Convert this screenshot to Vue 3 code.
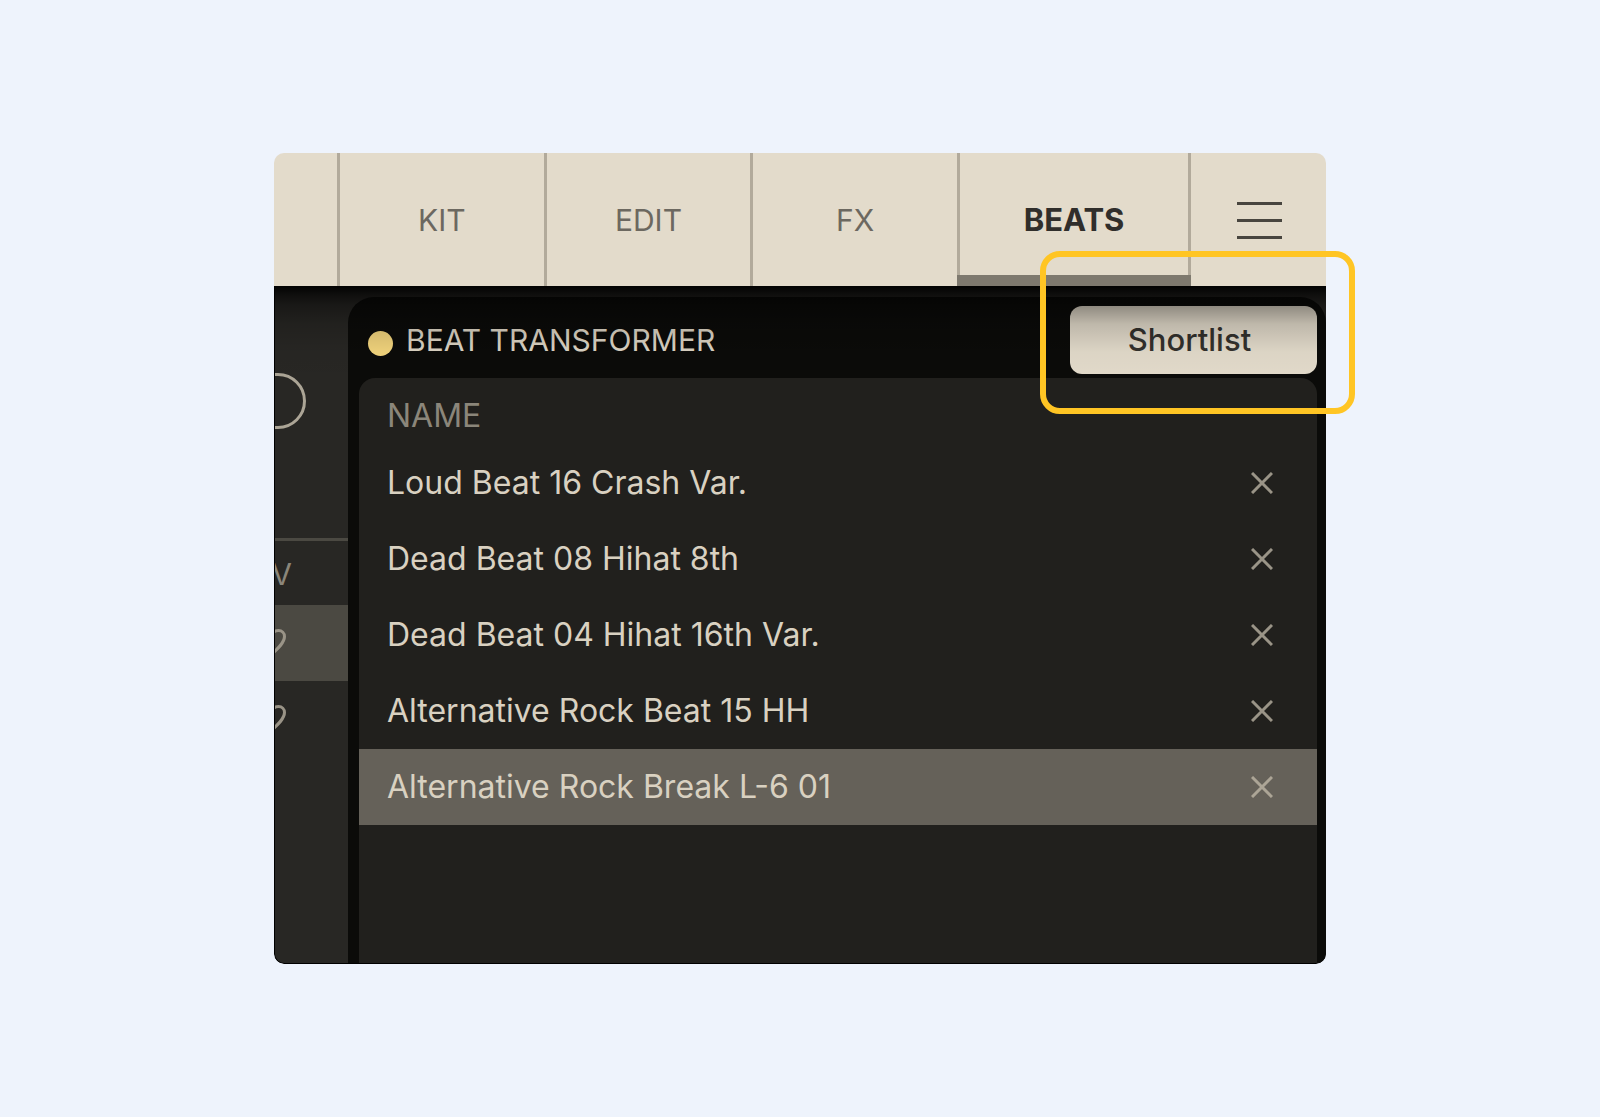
<script setup>
import { ref } from 'vue';

const tabs = ['KIT', 'EDIT', 'FX', 'BEATS'];
const activeTab = ref('BEATS');
const search = ref('');

const beats = ref([
  { id: 1, name: 'Loud Beat 16 Crash Var.' },
  { id: 2, name: 'Dead Beat 08 Hihat 8th' },
  { id: 3, name: 'Dead Beat 04 Hihat 16th Var.' },
  { id: 4, name: 'Alternative Rock Beat 15 HH' },
  { id: 5, name: 'Alternative Rock Break L-6 01' }
]);
const selectedId = ref(5);

// rows of the library that stay visible left of the panel
const favRows = ref([
  { id: 1, selected: true },
  { id: 2, selected: false }
]);

const removeBeat = (id) => {
  beats.value = beats.value.filter((b) => b.id !== id);
};
</script>

<template>
  <main class="page">
    <div class="stage">
      <div class="window">
        <nav class="tabs">
          <span class="tab-stub"></span>
          <button
            v-for="tab in tabs"
            :key="tab"
            type="button"
            :class="['tab', { active: tab === activeTab }]"
            @click="activeTab = tab"
          >
            {{ tab }}
          </button>
          <button type="button" class="menu" aria-label="Menu">
            <span></span>
            <span></span>
            <span></span>
          </button>
        </nav>

        <div class="body">
          <aside class="library">
            <div class="search-row">
              <input v-model="search" class="search" type="text" aria-label="Search">
            </div>
            <div class="fav-head">V</div>
            <div v-for="row in favRows" :key="row.id" :class="['fav-row', { selected: row.selected }]">
              <button type="button" aria-label="Favourite" @click="row.selected = !row.selected">
                <svg width="28" height="27" viewBox="0 0 28 27">
                  <path d="M14 25 C20 19.500 26.500 13.500 26.500 7.500 C26.500 4 24 1.500 20.500 1.500 C17.500 1.500 15 3 14 6 C13 3 10.500 1.500 7.500 1.500 C4 1.500 1.500 4 1.500 7.500 C1.500 13.500 8 19.500 14 25 Z" />
                </svg>
              </button>
            </div>
          </aside>

          <section class="panel">
            <header class="panel-head">
              <span class="dot"></span>
              <h2>BEAT TRANSFORMER</h2>
              <button type="button" class="shortlist">Shortlist</button>
            </header>

            <div class="list">
              <div class="list-head">NAME</div>
              <ul>
                <li
                  v-for="beat in beats"
                  :key="beat.id"
                  :class="['beat', { selected: beat.id === selectedId }]"
                  @click="selectedId = beat.id"
                >
                  <span>{{ beat.name }}</span>
                  <button type="button" :aria-label="'Remove ' + beat.name" @click.stop="removeBeat(beat.id)">
                    <svg width="22" height="22" viewBox="0 0 22 22">
                      <path d="M1 1 L21 21 M21 1 L1 21" />
                    </svg>
                  </button>
                </li>
              </ul>
            </div>
          </section>
          <div class="shade"></div>
        </div>
      </div>
      <div class="highlight"></div>
    </div>
  </main>
</template>

<style>
body {
  margin: 0;
  background: #eef3fc;
}
</style>

<style scoped>
* {
  box-sizing: border-box;
}

button {
  border: none;
  padding: 0;
  background: none;
  font: inherit;
  color: inherit;
  cursor: pointer;
}

.page {
  display: flex;
  min-height: 100vh;
  padding: 153px 274px;
  font-family: Inter, "Liberation Sans", sans-serif;
  font-size: 30px;
  line-height: 38px;
}

.stage {
  position: relative;
  display: flex;
  flex: 1;
}

.window {
  display: flex;
  flex-direction: column;
  flex: 1;
  min-width: 0;
  overflow: hidden;
  border-radius: 10px;
}

/* top tabs */
.tabs {
  display: flex;
  height: 133px;
  background: #e3dbcb;
  color: #6c6860;
}

.tab-stub {
  flex: 64;
}

.tab {
  flex: 207;
  border-left: 3px solid #b2aa9b;
}

.tab.active {
  position: relative;
  flex: 232;
  color: #302e2b;
  font-size: 31px;
  font-weight: 700;
}

/* underline runs over both dividers */
.tab.active::after {
  content: "";
  position: absolute;
  right: -3px;
  bottom: 0;
  left: -3px;
  height: 11px;
  background: #7e796e;
}

.menu {
  display: flex;
  flex: 135;
  flex-direction: column;
  align-items: center;
  justify-content: center;
  gap: 14px;
  padding: 2px 0 0 2px;
  border-left: 3px solid #b2aa9b;
}

.menu span {
  width: 45px;
  height: 3px;
  background: #48453f;
}

/* body */
.body {
  position: relative;
  display: flex;
  flex: 1;
  border: 1px solid #000;
  border-width: 0 0 1px 1px;
  border-radius: 0 0 10px 10px;
  overflow: hidden;
  background: #282724;
}

.shade {
  position: absolute;
  inset: 0 0 auto;
  height: 100px;
  pointer-events: none;
  background: linear-gradient(
    rgba(0, 0, 0, 0.95),
    rgba(0, 0, 0, 0.62) 9px,
    rgba(0, 0, 0, 0.38) 19px,
    rgba(0, 0, 0, 0.16) 38px,
    rgba(0, 0, 0, 0.03) 66px,
    transparent
  );
}

.library {
  width: 73px;
  overflow: hidden;
}

.search-row {
  display: flex;
  justify-content: flex-end;
  height: 255px;
  padding: 87px 42px 0 0;
  border-bottom: 3px solid #4b4942;
}

.search {
  flex: none;
  width: 200px;
  height: 56px;
  padding: 0 24px;
  border: 3px solid #aca596;
  border-radius: 28px;
  background: none;
  color: #d9d1c1;
  font: inherit;
}

.fav-head {
  display: flex;
  justify-content: flex-end;
  height: 64px;
  padding: 14px 56px 0 0;
  color: #8b867a;
}

.fav-row {
  display: flex;
  align-items: center;
  justify-content: flex-end;
  height: 76px;
  padding: 0 62px 2px 0;
}

.fav-row.selected {
  background: #4b4942;
}

.fav-row button,
.beat button {
  display: flex;
  flex: none;
}

svg path {
  fill: none;
  stroke: #9a9487;
  stroke-width: 3;
}

/* beat transformer panel */
.panel {
  display: flex;
  flex: 1;
  flex-direction: column;
  margin-top: 11px;
  padding: 0 9px 0 11px;
  border-radius: 26px 26px 0 0;
  background: #0b0b09;
}

.panel-head {
  display: flex;
  align-items: center;
  height: 81px;
  padding: 0 0 0 9px;
  color: #ddd5c5;
}

.dot {
  width: 25px;
  height: 25px;
  margin-top: 12px;
  border-radius: 50%;
  background: #f3d57d;
}

.panel-head h2 {
  flex: 1;
  margin: 4px 0 0 13px;
  font-size: 30px;
  font-weight: 400;
}

.shortlist {
  width: 247px;
  height: 68px;
  margin-top: 4px;
  padding-right: 8px;
  border-radius: 12px;
  background: #e3dbcb;
  color: #33312d;
  font-size: 31px;
  font-weight: 500;
}

.list {
  flex: 1;
  border-radius: 16px 16px 0 0;
  background: #21201d;
  font-size: 32px;
}

.list-head {
  height: 67px;
  padding: 19px 28px 0;
  color: #8b867a;
}

ul {
  margin: 0;
  padding: 0;
  list-style: none;
}

.beat {
  display: flex;
  align-items: center;
  justify-content: space-between;
  height: 76px;
  padding: 0 44px 0 28px;
  color: #d9d1c1;
}

.beat.selected {
  background: #656159;
}

.beat.selected path {
  stroke: #aca596;
}

.highlight {
  position: absolute;
  top: 98px;
  right: -29px;
  width: 315px;
  height: 163px;
  border: 6px solid #ffc524;
  border-radius: 20px;
  pointer-events: none;
}
</style>
